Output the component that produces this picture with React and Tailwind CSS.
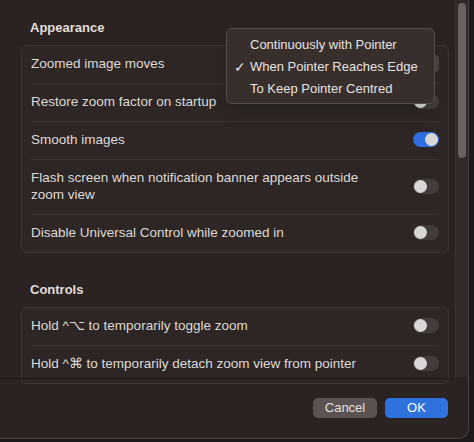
import React from "react";

const Toggle = ({ on }) => (
  <div
    className={
      "w-[26px] h-[15px] rounded-full flex items-center px-[1px] shrink-0 " +
      (on ? "bg-[#2f6de0] justify-end" : "bg-[#433c3a] justify-start")
    }
  >
    <div className="w-[13px] h-[13px] rounded-full bg-[#d9d6d5]" />
  </div>
);

const Row = ({ label, last, children }) => (
  <div className="mx-[9px]">
    <div className="flex items-center justify-between min-h-[37px] pt-[9px] pb-[11px]">
      <div className="text-[13.5px] leading-[17px] text-[#dedad8] max-w-[350px]">{label}</div>
      {children}
    </div>
    {!last && <div className="h-px bg-[#3a3331]" />}
  </div>
);

const Section = ({ title, children }) => (
  <div>
    <div className="pl-[9px] text-[13px] font-bold text-[#e2dedc] h-[18px] leading-[18px] mb-[8px]">{title}</div>
    <div className="rounded-[6px] border border-[#3c3533] bg-[#2d2624]">{children}</div>
  </div>
);

export default function App() {
  return (
    <div
      className="w-[474px] h-[442px] bg-[#1d1a19] relative overflow-hidden"
      style={{ fontFamily: '"Liberation Sans", Arial, sans-serif' }}
    >
      <div className="w-[469px] h-[439px] bg-[#2a2321] rounded-br-[10px] border-r border-b border-[#4a4341] flex flex-col overflow-hidden">
        <div className="flex flex-1 min-h-0">
          <div className="flex-1 pl-[21px] pr-[6px] pt-[19px] flex flex-col gap-[28px]">
            <Section title="Appearance">
              <Row label="Zoomed image moves">
                <div className="w-[28px] h-[17px] rounded-[4px] bg-[#4a4442]" />
              </Row>
              <Row label="Restore zoom factor on startup">
                <Toggle />
              </Row>
              <Row label="Smooth images">
                <Toggle on />
              </Row>
              <Row label="Flash screen when notification banner appears outside zoom view">
                <Toggle />
              </Row>
              <Row label="Disable Universal Control while zoomed in" last>
                <Toggle />
              </Row>
            </Section>
            <Section title="Controls">
              <Row label="Hold ^⌥ to temporarily toggle zoom">
                <Toggle />
              </Row>
              <Row label="Hold ^⌘ to temporarily detach zoom view from pointer" last>
                <Toggle />
              </Row>
            </Section>
          </div>
          <div className="w-[13px] bg-[#312a28] border-l border-[#3a3331] pt-[3px] flex justify-center">
            <div className="w-[8px] h-[155px] rounded-full bg-[#6a6260]" />
          </div>
        </div>
        <div className="h-[60px] shrink-0 border-t border-[#1f1a19] flex items-center justify-end gap-[8px] pr-[20px] pb-[2px]">
          <div className="w-[64px] h-[20px] rounded-[5px] bg-[#5b5351] text-[13px] text-[#e6e2e0] flex items-center justify-center">
            Cancel
          </div>
          <div className="w-[63px] h-[20px] rounded-[5px] bg-[#2f72dd] text-[13px] text-white flex items-center justify-center">
            OK
          </div>
        </div>
      </div>

      <div className="absolute left-[226px] top-[28px] w-[209px] h-[76px] rounded-[6px] bg-[#382f2d] border border-[#574e4c] shadow-lg py-[5px]">
        {[
          "Continuously with Pointer",
          "When Pointer Reaches Edge",
          "To Keep Pointer Centred",
        ].map((t, i) => (
          <div key={t} className="h-[22px] flex items-center text-[13px] text-[#e6e2e0]">
            <span className="w-[23px] pl-[7px] text-[14px] leading-none">{i === 1 ? "✓" : ""}</span>
            {t}
          </div>
        ))}
      </div>
    </div>
  );
}
